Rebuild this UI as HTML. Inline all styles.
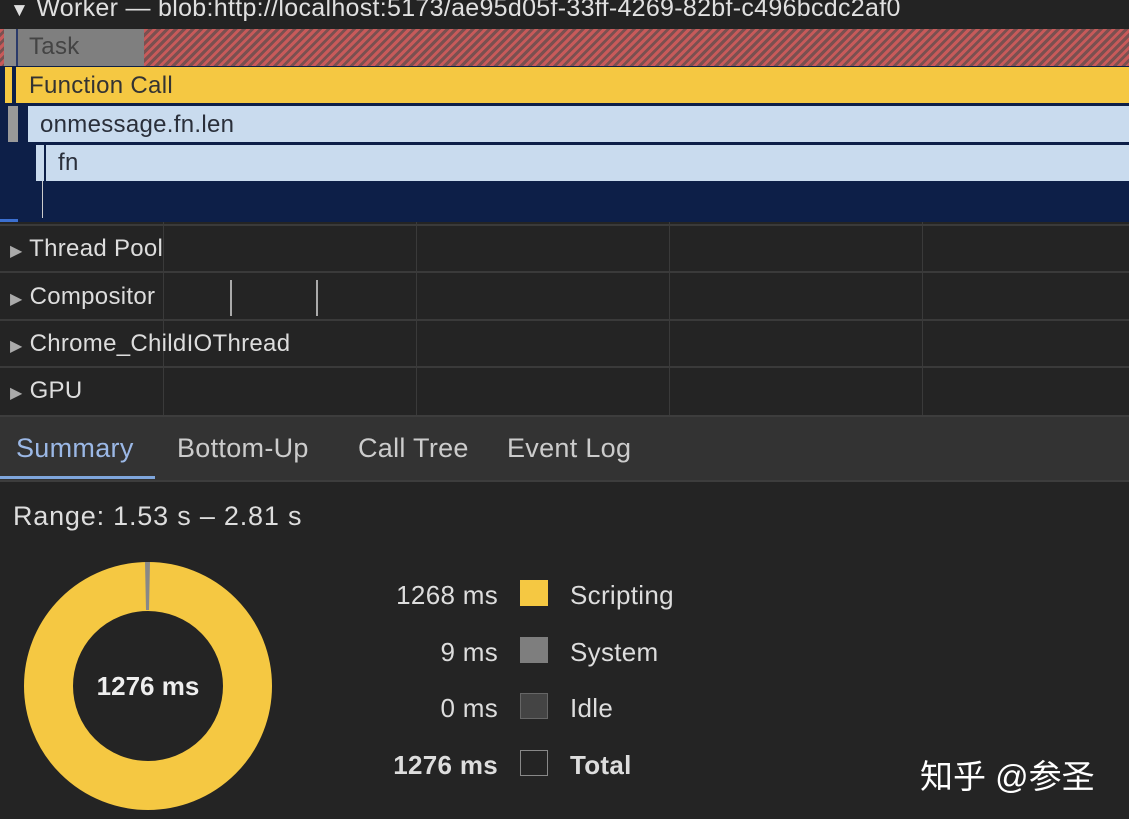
<!DOCTYPE html><html><head><style>
body{margin:0;width:1129px;height:819px;background:#242424;font-family:"Liberation Sans",sans-serif;overflow:hidden;position:relative}
.a{position:absolute;white-space:nowrap}
.vl{position:absolute;width:1px;background:#3a3a3a}
.t{letter-spacing:0.3px}
</style></head><body>
<div class="a" style="left:0;top:0;width:1129px;height:29px;background:#232323"></div>
<div class="a t" style="left:10px;top:-6px;color:#e0e0e0;font-size:25px"><span style="font-size:19px">▼</span> Worker — blob:http://localhost:5173/ae95d05f-33ff-4269-82bf-c496bcdc2af0</div>
<div class="a" style="left:0;top:29px;width:1129px;height:193px;background:#0d1f48"></div>
<div class="a" style="left:0;top:29px;width:1129px;height:37px;background:repeating-linear-gradient(135deg,#c85a5a 0 3px,#7a5050 3px 6px)"></div>
<div class="a" style="left:17px;top:29px;width:127px;height:37px;background:#7f7f7f"></div>
<div class="a" style="left:4px;top:29px;width:12px;height:37px;background:#8a8a8a;border-right:2px solid #2a3a6a"></div>
<div class="a t" style="left:29px;top:33px;color:#444;font-size:24px">Task</div>
<div class="a" style="left:5px;top:67px;width:1124px;height:36px;background:#f5c842"></div>
<div class="a" style="left:12px;top:67px;width:4px;height:36px;background:#0d1f48"></div>
<div class="a t" style="left:29px;top:72px;color:#333;font-size:24px">Function Call</div>
<div class="a" style="left:28px;top:106px;width:1101px;height:36px;background:#c9dbee"></div>
<div class="a" style="left:8px;top:106px;width:10px;height:36px;background:#999"></div>
<div class="a t" style="left:40px;top:111px;color:#2a2f3a;font-size:24px">onmessage.fn.len</div>
<div class="a" style="left:36px;top:145px;width:1093px;height:36px;background:#c9dbee"></div>
<div class="a" style="left:44px;top:145px;width:2px;height:36px;background:#0d1f48"></div>
<div class="a t" style="left:58px;top:149px;color:#2a2f3a;font-size:24px">fn</div>
<div class="a" style="left:42px;top:181px;width:1px;height:37px;background:#ccc"></div>
<div class="a" style="left:0;top:219px;width:18px;height:3px;background:#3b6fd0"></div>
<div class="a" style="left:0;top:222px;width:1129px;height:193px;background:#242424"></div>
<div class="vl" style="left:163px;top:222px;height:193px"></div>
<div class="vl" style="left:416px;top:222px;height:193px"></div>
<div class="vl" style="left:669px;top:222px;height:193px"></div>
<div class="vl" style="left:922px;top:222px;height:193px"></div>
<div class="a" style="left:0;top:224px;width:1129px;height:2px;background:#3a3a3a"></div>
<div class="a" style="left:0;top:271px;width:1129px;height:2px;background:#3a3a3a"></div>
<div class="a" style="left:0;top:319px;width:1129px;height:2px;background:#3a3a3a"></div>
<div class="a" style="left:0;top:366px;width:1129px;height:2px;background:#3a3a3a"></div>
<div class="a" style="left:230px;top:280px;width:2px;height:36px;background:#aaa"></div>
<div class="a" style="left:316px;top:280px;width:2px;height:36px;background:#aaa"></div>
<div class="a t" style="left:10px;top:235px;color:#ddd;font-size:24px"><span style="font-size:16px;color:#aaa">▶</span> Thread Pool</div>
<div class="a t" style="left:10px;top:283px;color:#ddd;font-size:24px"><span style="font-size:16px;color:#aaa">▶</span> Compositor</div>
<div class="a t" style="left:10px;top:330px;color:#ddd;font-size:24px"><span style="font-size:16px;color:#aaa">▶</span> Chrome_ChildIOThread</div>
<div class="a t" style="left:10px;top:377px;color:#ddd;font-size:24px"><span style="font-size:16px;color:#aaa">▶</span> GPU</div>
<div class="a" style="left:0;top:415px;width:1129px;height:63px;background:#333;border-top:2px solid #3d3d3d;border-bottom:2px solid #3d3d3d"></div>
<div class="a" style="left:0;top:476px;width:155px;height:3px;background:#7fa6dd"></div>
<div class="a t" style="left:16px;top:433px;color:#9bb8e6;font-size:27px">Summary</div>
<div class="a t" style="left:177px;top:433px;color:#ccc;font-size:27px">Bottom-Up</div>
<div class="a t" style="left:358px;top:433px;color:#ccc;font-size:27px">Call Tree</div>
<div class="a t" style="left:507px;top:433px;color:#ccc;font-size:27px">Event Log</div>
<div class="a" style="left:13px;top:501px;color:#ddd;font-size:27px;letter-spacing:0.8px">Range: 1.53 s – 2.81 s</div>
<svg class="a" style="left:0;top:540px" width="300" height="279"><circle cx="148" cy="146" r="99.5" fill="none" stroke="#f5c842" stroke-width="49"/><path d="M145 22 L150 22 L149 70 L146 70Z" fill="#888"/></svg>
<div class="a" style="left:48px;top:671px;width:200px;text-align:center;color:#eee;font-size:26px;font-weight:bold">1276 ms</div>
<div class="a t" style="left:350px;top:580px;width:148px;text-align:right;color:#ddd;font-size:26px">1268 ms</div>
<div class="a t" style="left:350px;top:637px;width:148px;text-align:right;color:#ddd;font-size:26px">9 ms</div>
<div class="a t" style="left:350px;top:693px;width:148px;text-align:right;color:#ddd;font-size:26px">0 ms</div>
<div class="a t" style="left:350px;top:750px;width:148px;text-align:right;color:#ddd;font-size:26px;font-weight:bold">1276 ms</div>
<div class="a" style="left:520px;top:580px;width:28px;height:26px;background:#f5c842"></div>
<div class="a" style="left:520px;top:637px;width:28px;height:26px;background:#7e7e7e"></div>
<div class="a" style="left:520px;top:693px;width:28px;height:26px;background:#444;border:1px solid #666;box-sizing:border-box"></div>
<div class="a" style="left:520px;top:750px;width:28px;height:26px;border:1px solid #888;box-sizing:border-box"></div>
<div class="a t" style="left:570px;top:580px;color:#ddd;font-size:26px">Scripting</div>
<div class="a t" style="left:570px;top:637px;color:#ddd;font-size:26px">System</div>
<div class="a t" style="left:570px;top:693px;color:#ddd;font-size:26px">Idle</div>
<div class="a t" style="left:570px;top:750px;color:#ddd;font-size:26px;font-weight:bold">Total</div>
<div class="a" style="left:920px;top:750px;color:#fff;font-size:33px;font-family:'Liberation Sans','Noto Sans CJK SC',sans-serif">知乎 @参圣</div>
</body></html>
